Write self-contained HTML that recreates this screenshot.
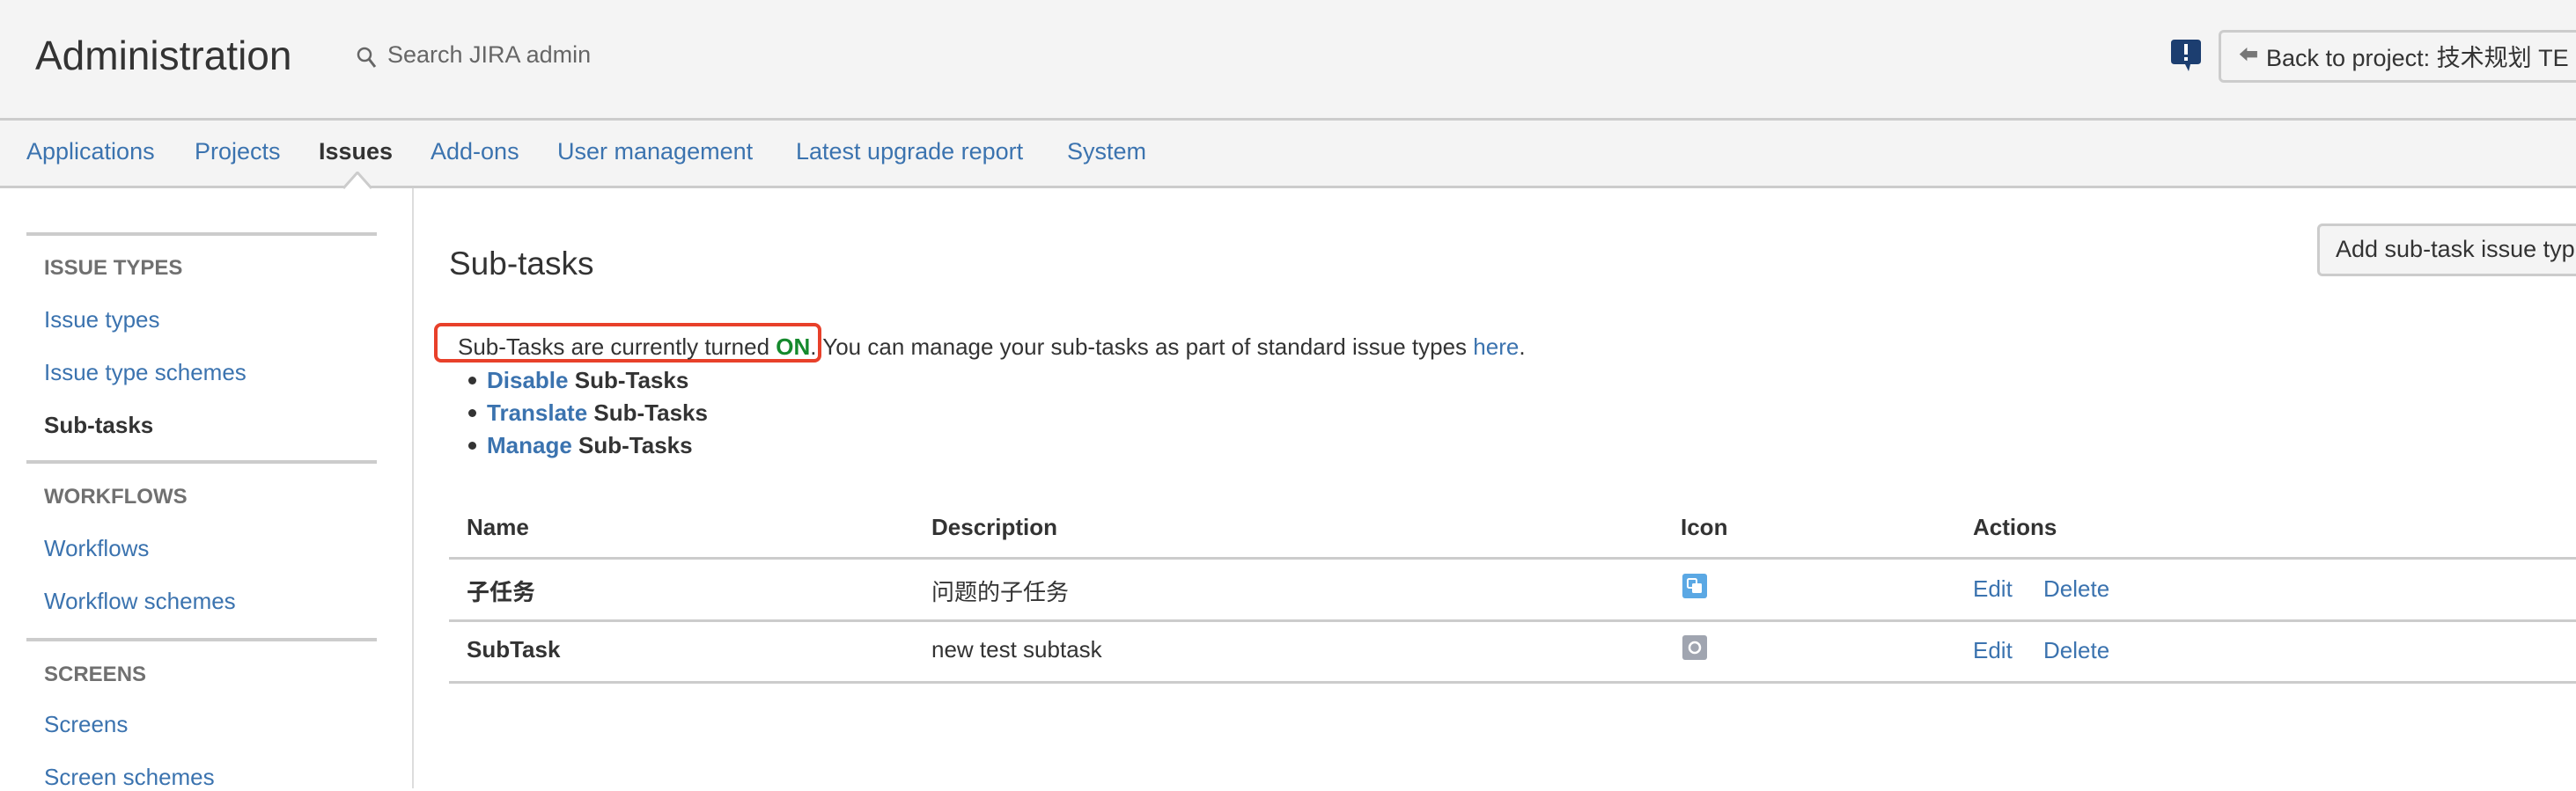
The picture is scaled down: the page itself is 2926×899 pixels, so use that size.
<!DOCTYPE html>
<html><head><meta charset="utf-8"><style>
*{margin:0;padding:0;box-sizing:border-box}
body{width:2926px;height:896px;overflow:hidden;background:#fff;font-family:"Liberation Sans","Noto Sans CJK SC",sans-serif;color:#333;position:relative;font-size:26px}
.a{position:absolute;white-space:nowrap}
.l{color:#3b73af}
.hd{position:absolute;left:0;top:0;width:2926px;height:137px;background:#f4f4f4;border-bottom:3px solid #ccc}
.nav{position:absolute;left:0;top:137px;width:2926px;height:77px;background:#f4f4f4;border-bottom:3px solid #ccc}
.side{position:absolute;left:468px;top:214px;width:2px;height:682px;background:#ddd}
.hr{position:absolute;height:4px;background:#ccc}
.sh{font-weight:bold;color:#707070;font-size:24px}
.btn{position:absolute;background:#f4f4f4;border:3px solid #ccc;border-radius:6px;color:#333}
.dot{position:absolute;width:9px;height:9px;border-radius:50%;background:#333}
</style></head><body>
<div class="hd"></div>
<div class="a" style="left:40px;top:36px;font-size:46px;color:#333">Administration</div>
<svg class="a" style="left:404px;top:52px" width="26" height="28" viewBox="0 0 26 28"><circle cx="10" cy="10" r="7" fill="none" stroke="#666" stroke-width="2.5"/><path d="M15 15 L22 24" stroke="#666" stroke-width="3"/></svg>
<div class="a" style="left:440px;top:47px;font-size:27px;color:#666">Search JIRA admin</div>
<svg class="a" style="left:2466px;top:45px" width="34" height="36" viewBox="0 0 34 36"><path d="M4 0 H30 Q34 0 34 4 V24 Q34 28 30 28 H22 L20 36 L16 28 H4 Q0 28 0 24 V4 Q0 0 4 0Z" fill="#1c3e70"/><rect x="15" y="5" width="4" height="12" fill="#fff"/><rect x="15" y="20" width="4" height="4" fill="#fff"/></svg>
<div class="btn" style="left:2520px;top:34px;width:420px;height:60px"></div>
<div class="a" style="left:2543px;top:45px;font-size:22px;color:#777">&#x2B05;</div>
<div class="a" style="left:2574px;top:44px;font-size:27px">Back to project: 技术规划 TE</div>
<div class="nav"></div>
<svg class="a" style="left:390px;top:195px" width="32" height="22" viewBox="0 0 32 22"><path d="M0 19 L16 1 L32 19" fill="#fff" stroke="#ccc" stroke-width="3"/><rect x="2" y="19" width="28" height="4" fill="#fff"/></svg>
<div class="a l" style="top:157px;font-size:27px;left:30px">Applications</div>
<div class="a l" style="top:157px;font-size:27px;left:221px">Projects</div>
<div class="a" style="top:157px;font-size:27px;left:362px;font-weight:bold;color:#333">Issues</div>
<div class="a l" style="top:157px;font-size:27px;left:489px">Add-ons</div>
<div class="a l" style="top:157px;font-size:27px;left:633px">User management</div>
<div class="a l" style="top:157px;font-size:27px;left:904px">Latest upgrade report</div>
<div class="a l" style="top:157px;font-size:27px;left:1212px">System</div>
<div class="side"></div>
<div class="hr" style="left:30px;top:264px;width:398px"></div>
<div class="a sh" style="left:50px;top:291px">ISSUE TYPES</div>
<div class="a l" style="left:50px;top:348px">Issue types</div>
<div class="a l" style="left:50px;top:408px">Issue type schemes</div>
<div class="a" style="left:50px;top:468px;font-weight:bold;color:#333">Sub-tasks</div>
<div class="hr" style="left:30px;top:523px;width:398px"></div>
<div class="a sh" style="left:50px;top:551px">WORKFLOWS</div>
<div class="a l" style="left:50px;top:608px">Workflows</div>
<div class="a l" style="left:50px;top:668px">Workflow schemes</div>
<div class="hr" style="left:30px;top:725px;width:398px"></div>
<div class="a sh" style="left:50px;top:753px">SCREENS</div>
<div class="a l" style="left:50px;top:808px">Screens</div>
<div class="a l" style="left:50px;top:868px">Screen schemes</div>
<div class="a" style="left:510px;top:279px;font-size:37px;color:#333">Sub-tasks</div>
<div class="btn" style="left:2632px;top:254px;width:320px;height:60px"></div>
<div class="a" style="left:2653px;top:268px;font-size:27px">Add sub-task issue typ</div>
<div class="a" style="left:493px;top:367px;width:440px;height:45px;border:4px solid #e8402a;border-radius:8px"></div>
<div class="a" style="left:520px;top:379px">Sub-Tasks are currently turned <b style="color:#14892c">ON</b>. You can manage your sub-tasks as part of standard issue types <span class="l">here</span>.</div>
<div class="dot" style="left:532px;top:428px"></div>
<div class="dot" style="left:532px;top:465px"></div>
<div class="dot" style="left:532px;top:502px"></div>
<div class="a" style="left:553px;top:417px;font-weight:bold"><span class="l">Disable</span> Sub-Tasks</div>
<div class="a" style="left:553px;top:454px;font-weight:bold"><span class="l">Translate</span> Sub-Tasks</div>
<div class="a" style="left:553px;top:491px;font-weight:bold"><span class="l">Manage</span> Sub-Tasks</div>
<div class="a" style="left:530px;top:584px;font-weight:bold">Name</div>
<div class="a" style="left:1058px;top:584px;font-weight:bold">Description</div>
<div class="a" style="left:1909px;top:584px;font-weight:bold">Icon</div>
<div class="a" style="left:2241px;top:584px;font-weight:bold">Actions</div>
<div class="hr" style="left:510px;top:633px;width:2416px;height:3px"></div>
<div class="a" style="left:530px;top:653px;font-weight:bold">子任务</div>
<div class="a" style="left:1058px;top:653px">问题的子任务</div>
<svg class="a" style="left:1911px;top:652px" width="28" height="28" viewBox="0 0 28 28"><rect width="28" height="28" rx="3" fill="#5ba8e4"/><rect x="6" y="6" width="10" height="10" rx="1.5" fill="none" stroke="#fff" stroke-width="2"/><rect x="11" y="11" width="11" height="11" rx="1.5" fill="#fff"/></svg>
<div class="a l" style="left:2241px;top:654px">Edit</div>
<div class="a l" style="left:2321px;top:654px">Delete</div>
<div class="hr" style="left:510px;top:704px;width:2416px;height:3px"></div>
<div class="a" style="left:530px;top:723px;font-weight:bold">SubTask</div>
<div class="a" style="left:1058px;top:723px">new test subtask</div>
<svg class="a" style="left:1911px;top:722px" width="28" height="28" viewBox="0 0 28 28"><rect width="28" height="28" rx="3" fill="#a0a5b0"/><circle cx="14" cy="14" r="6" fill="none" stroke="#fff" stroke-width="2.5"/></svg>
<div class="a l" style="left:2241px;top:724px">Edit</div>
<div class="a l" style="left:2321px;top:724px">Delete</div>
<div class="hr" style="left:510px;top:774px;width:2416px;height:3px"></div>
</body></html>
